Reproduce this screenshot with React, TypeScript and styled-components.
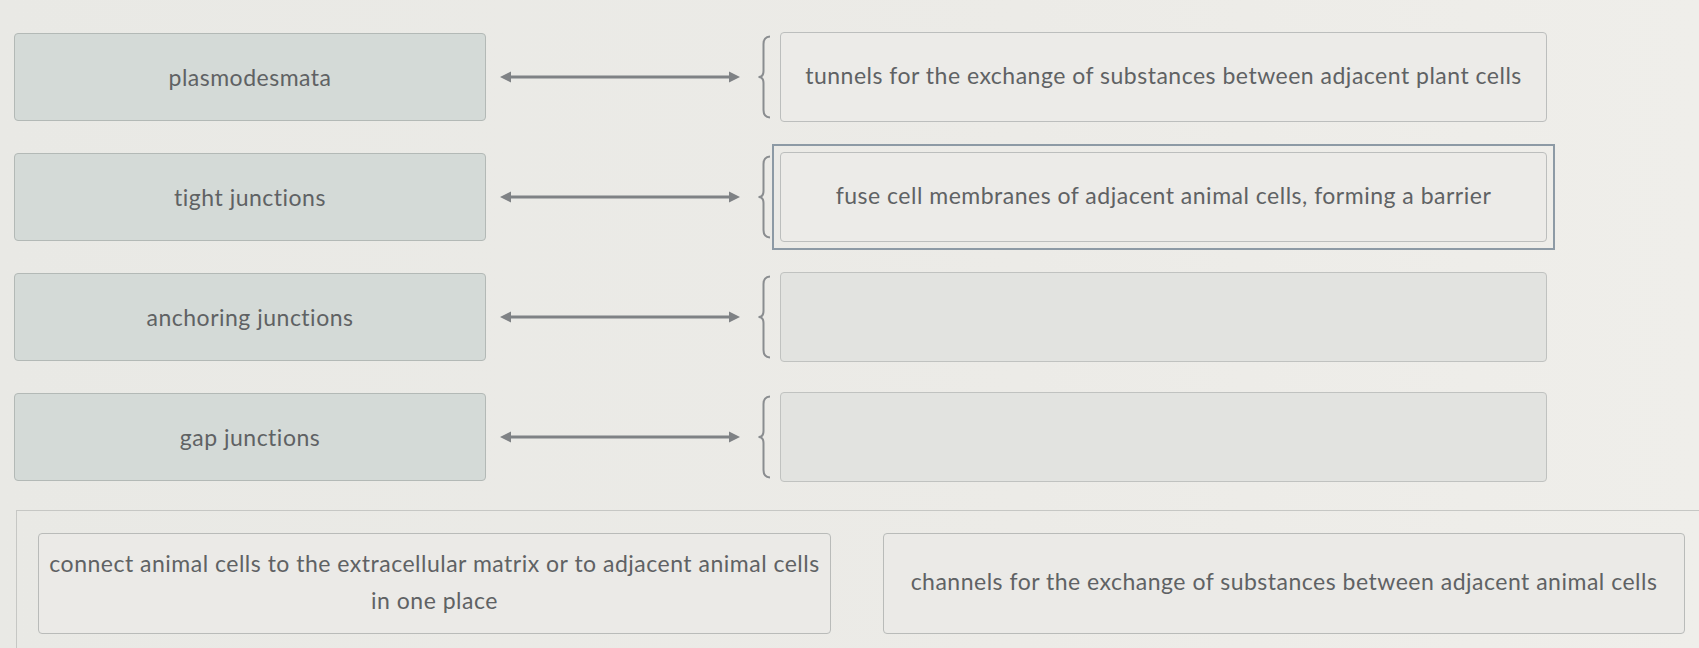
import React from "react";
import styled, { createGlobalStyle } from "styled-components";

const GlobalStyle = createGlobalStyle`
  html, body {
    margin: 0;
    padding: 0;
    background: #ebeae6;
  }
  body {
    font-family: "Lato", "Noto Sans", sans-serif;
    color: #5f6264;
    overflow: hidden;
  }
`;

const Page = styled.div`
  width: 1699px;
  height: 648px;
  overflow: hidden;
  background: linear-gradient(90deg, #e9e9e5 0%, #ecebe7 60%, #efeeea 100%);
  padding-top: 24px;
  box-sizing: border-box;
`;

const Rows = styled.div`
  display: flex;
  flex-direction: column;
  gap: 14px;
  padding-left: 14px;
`;

const Row = styled.div`
  display: flex;
  align-items: center;
  height: 106px;
`;

const labelFont = `
  font-size: 23px;
  letter-spacing: 0.5px;
  color: #5f6264;
`;

const TermBox = styled.div`
  width: 472px;
  height: 88px;
  box-sizing: border-box;
  background: #d4dad7;
  border: 1px solid #b3b9b6;
  border-radius: 4px;
  display: flex;
  align-items: center;
  justify-content: center;
  ${labelFont}
`;

const ArrowCell = styled.div`
  width: 271px;
  display: flex;
  align-items: center;
  padding: 0 17px 0 14px;
  box-sizing: border-box;
`;

const BraceCell = styled.div`
  width: 14px;
  height: 84px;
  margin-right: 1px;
`;

const DropZone = styled.div<{ $selected?: boolean }>`
  width: 783px;
  height: 106px;
  box-sizing: border-box;
  padding: 6px;
  border: 2px solid ${(p) => (p.$selected ? "#8d9aa5" : "transparent")};
  display: flex;
`;

const AnswerCard = styled.div<{ $filled?: boolean }>`
  flex: 1;
  box-sizing: border-box;
  border: 1px solid ${(p) => (p.$filled ? "#bcbebd" : "#c0c2c0")};
  border-radius: 4px;
  background: ${(p) => (p.$filled ? "#ecebe8" : "#e2e3e0")};
  display: flex;
  align-items: center;
  justify-content: center;
  text-align: center;
  padding-bottom: 4px;
  ${labelFont}
`;

const Bank = styled.div`
  margin: 20px 0 0 16px;
  border-top: 1px solid #c6c7c4;
  border-left: 1px solid #c6c7c4;
  padding: 22px 0 0 21px;
  display: flex;
  align-items: flex-start;
  gap: 52px;
  height: 200px;
  box-sizing: border-box;
`;

const BankCard = styled.div<{ $w: number }>`
  width: ${(p) => p.$w}px;
  height: 101px;
  box-sizing: border-box;
  border: 1px solid #b9bbb9;
  border-radius: 4px;
  background: #ebeae7;
  display: flex;
  align-items: center;
  justify-content: center;
  text-align: center;
  padding: 0 2px 4px;
  line-height: 37px;
  ${labelFont}
`;

const Arrow = () => (
  <svg width="240" height="12" viewBox="0 0 240 12">
    <line x1="8" y1="6" x2="232" y2="6" stroke="#7f8285" strokeWidth="3" />
    <polygon points="0,6 11,0.5 11,11.5" fill="#7f8285" />
    <polygon points="240,6 229,0.5 229,11.5" fill="#7f8285" />
  </svg>
);

const Brace = () => (
  <svg width="14" height="84" viewBox="0 0 14 84">
    <path
      d="M13 1.5 Q6.5 2 6.5 9 L6.5 36 Q6.5 42 1.5 42 Q6.5 42 6.5 48 L6.5 75 Q6.5 82 13 82.5"
      fill="none"
      stroke="#8a8d90"
      strokeWidth="2"
    />
  </svg>
);

const pairs: { term: string; answer?: string; selected?: boolean }[] = [
  { term: "plasmodesmata", answer: "tunnels for the exchange of substances between adjacent plant cells" },
  { term: "tight junctions", answer: "fuse cell membranes of adjacent animal cells, forming a barrier", selected: true },
  { term: "anchoring junctions" },
  { term: "gap junctions" },
];

export default function App() {
  return (
    <Page>
      <GlobalStyle />
      <Rows>
        {pairs.map((p) => (
          <Row key={p.term}>
            <TermBox>{p.term}</TermBox>
            <ArrowCell>
              <Arrow />
            </ArrowCell>
            <BraceCell>
              <Brace />
            </BraceCell>
            <DropZone $selected={p.selected}>
              <AnswerCard $filled={!!p.answer}>{p.answer}</AnswerCard>
            </DropZone>
          </Row>
        ))}
      </Rows>
      <Bank>
        <BankCard $w={793}>
          connect animal cells to the extracellular matrix or to adjacent animal cells in one place
        </BankCard>
        <BankCard $w={802}>channels for the exchange of substances between adjacent animal cells</BankCard>
      </Bank>
    </Page>
  );
}
